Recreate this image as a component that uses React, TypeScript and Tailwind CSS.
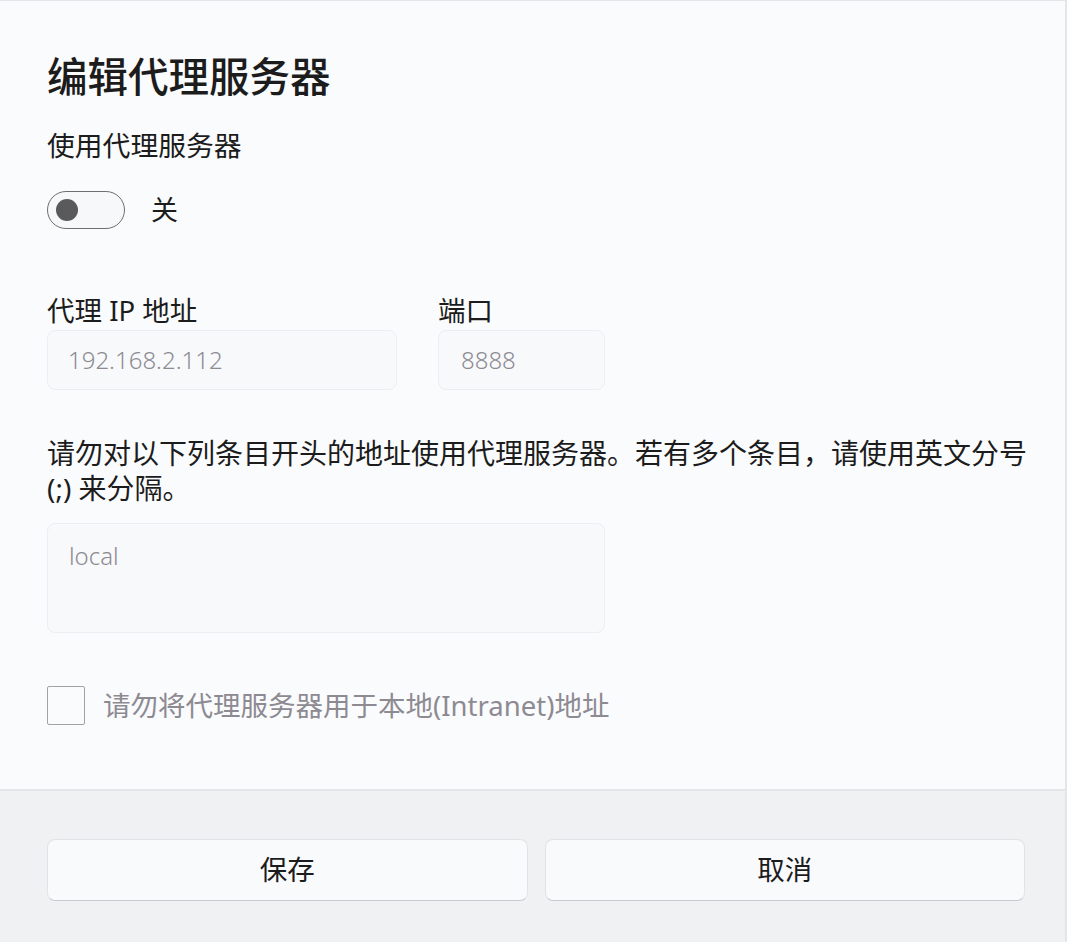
import React, { useState } from "react";

const font = { fontFamily: '"Noto Sans", "Noto Sans CJK SC", sans-serif' };

const App = () => {
  const [enabled, setEnabled] = useState(false);
  const [bypassLocal, setBypassLocal] = useState(false);

  return (
    <div
      className="w-[1067px] h-[942px] flex flex-col bg-[#fafbfd] border-r-2 border-t border-[#e4e5e8] text-[#1c1c1c]"
      style={font}
    >
      {/* Body */}
      <div className="flex-1 flex flex-col pl-[47px] pr-[30px] pt-[52px]">
        <h1 className="text-[40.5px] leading-[48px] font-medium">编辑代理服务器</h1>

        <p className="mt-[26px] text-[27.8px] leading-[36px]">使用代理服务器</p>

        <div className="mt-[28px] flex items-center gap-[26px]">
          <button
            onClick={() => setEnabled(!enabled)}
            className={`w-[78px] h-[38px] rounded-full border-[1.5px] flex items-center px-[8px] ${
              enabled ? "bg-[#005fb8] border-[#005fb8] justify-end" : "bg-[#f7f8fa] border-[#6e6e70] justify-start"
            }`}
          >
            <span
              className={`w-[22px] h-[22px] rounded-full ${enabled ? "bg-white" : "bg-[#5a5a5c]"}`}
            />
          </button>
          <span className="text-[27px] leading-[36px]">{enabled ? "开" : "关"}</span>
        </div>

        {/* Address + port */}
        <div className="mt-[64px] flex gap-[41px]">
          <div className="flex flex-col w-[350px]">
            <label className="text-[27.5px] leading-[36px]">代理 IP 地址</label>
            <div className="mt-px h-[60px] rounded-[8px] border border-[#eceef1] bg-[#f8f9fb] flex items-center px-[20px]">
              <span className="text-[24px] font-light text-[#8d8a92]">192.168.2.112</span>
            </div>
          </div>
          <div className="flex flex-col w-[167px]">
            <label className="text-[27.5px] leading-[36px]">端口</label>
            <div className="mt-px h-[60px] rounded-[8px] border border-[#eceef1] bg-[#f8f9fb] flex items-center px-[22px]">
              <span className="text-[24px] font-light text-[#8d8a92]">8888</span>
            </div>
          </div>
        </div>

        <p className="mt-[46px] text-[28px] leading-[35px] whitespace-nowrap">
          请勿对以下列条目开头的地址使用代理服务器。若有多个条目，请使用英文分号
          <br />
          (;) 来分隔。
        </p>

        <div className="mt-[17px] w-[558px] h-[110px] rounded-[8px] border border-[#eceef1] bg-[#f8f9fb] px-[21px] pt-[14px]">
          <span className="text-[24px] font-light text-[#8d8a92]">local</span>
        </div>

        <div className="mt-[53px] flex items-center gap-[18px]">
          <button
            onClick={() => setBypassLocal(!bypassLocal)}
            className="w-[38px] h-[39px] rounded-[2px] border-[1.5px] border-[#a3a3a6] bg-[#fafbfd]"
          />
          <span className="text-[27.5px] leading-[36px] text-[#8d8a92]">
            请勿将代理服务器用于本地(Intranet)地址
          </span>
        </div>
      </div>

      {/* Footer */}
      <div className="h-[153px] shrink-0 bg-[#f0f1f3] border-t-2 border-[#e3e5e8] pl-[47px] pr-[40px] pt-[48px] flex gap-[17px]">
        <button className="flex-1 h-[62px] rounded-[8px] bg-[#f9fafc] border border-[#e2e3e6] border-b-[#c9cace] text-[27.5px]">
          保存
        </button>
        <button className="flex-1 h-[62px] rounded-[8px] bg-[#f9fafc] border border-[#e2e3e6] border-b-[#c9cace] text-[27.5px]">
          取消
        </button>
      </div>
    </div>
  );
};

export default App;
